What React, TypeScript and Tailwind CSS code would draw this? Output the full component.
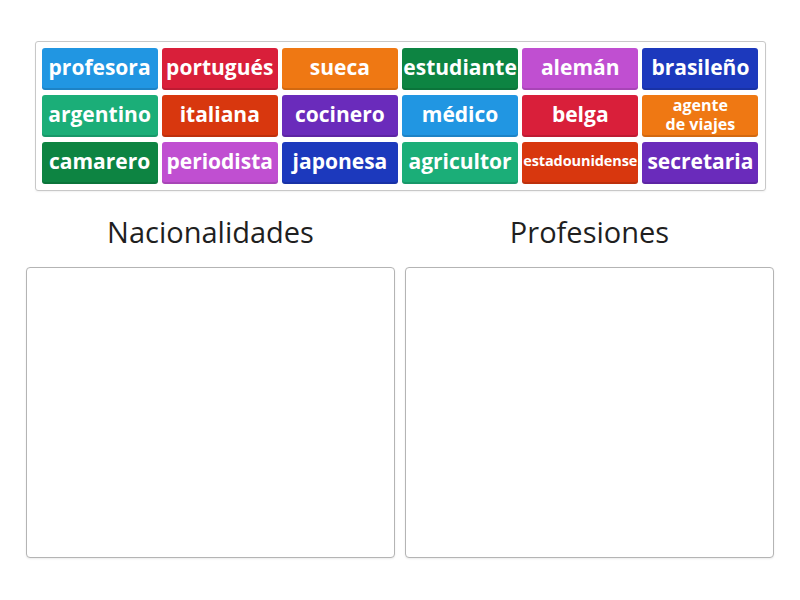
import React from 'react';

const palette = [
  'bg-[#2196e2]',
  'bg-[#d91f3a]',
  'bg-[#ef7813]',
  'bg-[#0d8442]',
  'bg-[#c04fd1]',
  'bg-[#1c39bd]',
  'bg-[#1bae78]',
  'bg-[#d8370e]',
  'bg-[#6a2bbb]',
];

const words: { label: string; size?: 'small' | 'two' }[] = [
  { label: 'profesora' },
  { label: 'portugués' },
  { label: 'sueca' },
  { label: 'estudiante' },
  { label: 'alemán' },
  { label: 'brasileño' },
  { label: 'argentino' },
  { label: 'italiana' },
  { label: 'cocinero' },
  { label: 'médico' },
  { label: 'belga' },
  { label: 'agente de viajes', size: 'two' },
  { label: 'camarero' },
  { label: 'periodista' },
  { label: 'japonesa' },
  { label: 'agricultor' },
  { label: 'estadounidense', size: 'small' },
  { label: 'secretaria' },
];

const Tile: React.FC<{ label: string; size?: 'small' | 'two'; color: string }> = ({ label, size, color }) => {
  let text = 'text-[21px] leading-none';
  if (size === 'small') text = 'text-[14.5px] leading-none tracking-[-0.1px]';
  if (size === 'two') text = 'text-[16px] leading-[19px]';
  return (
    <div
      className={`${color} h-[42px] rounded-[3px] flex items-center justify-center text-center text-white font-bold shadow-[inset_0_-2px_0_rgba(0,0,0,0.12)] ${text}`}
    >
      {size === 'two' ? (
        <span className="flex flex-col pb-[2px]">
          <span>agente</span>
          <span>de viajes</span>
        </span>
      ) : (
        <span className="pb-[3px]">{label}</span>
      )}
    </div>
  );
};

const DropZone: React.FC<{ title: string }> = ({ title }) => (
  <div className="flex flex-col">
    <h2 className="text-[29px] leading-[38px] text-center text-[#1f1f1f] font-normal">{title}</h2>
    <div className="mt-[16px] h-[291px] rounded-[4px] border border-[#b4b4b4] bg-white shadow-[0_1px_2px_rgba(0,0,0,0.08)]" />
  </div>
);

export default function App() {
  return (
    <div className="w-[800px] h-[600px] bg-white pt-[41px] font-['Open_Sans',sans-serif]">
      <div className="mx-auto w-[731px] rounded-[3px] border border-[#c8c8c8] p-[6px] shadow-[0_1px_2px_rgba(0,0,0,0.06)]">
        <div className="grid grid-cols-6 gap-x-[4px] gap-y-[5px]">
          {words.map((w, i) => (
            <Tile key={w.label} label={w.label} size={w.size} color={palette[i % palette.length]} />
          ))}
        </div>
      </div>
      <div className="mt-[22px] px-[26px] grid grid-cols-2 gap-[10px]">
        <DropZone title="Nacionalidades" />
        <DropZone title="Profesiones" />
      </div>
    </div>
  );
}
